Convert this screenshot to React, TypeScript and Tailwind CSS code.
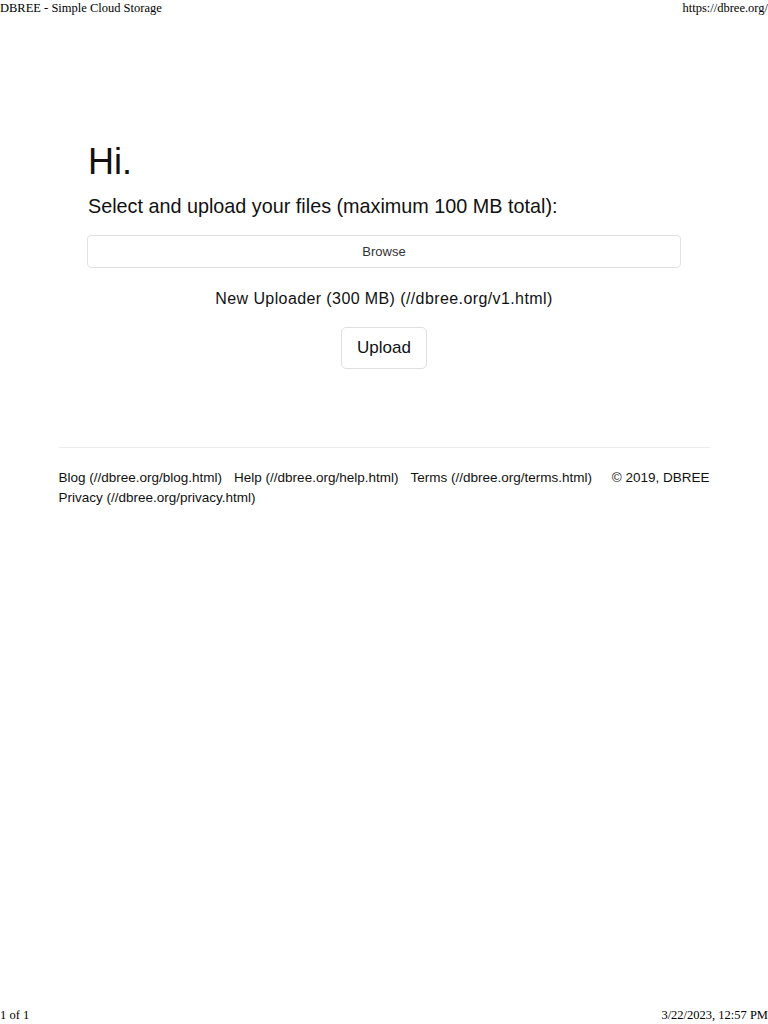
export default function App() {
  const links = [
    "Blog (//dbree.org/blog.html)",
    "Help (//dbree.org/help.html)",
    "Terms (//dbree.org/terms.html)",
    "Privacy (//dbree.org/privacy.html)",
  ];

  return (
    <div className="flex h-[1024px] w-[768px] flex-col bg-white text-[#111]">
      {/* print header */}
      <div className="flex h-[20px] justify-between font-['Liberation_Serif',serif] text-[12.5px] leading-[16px] text-black">
        <span>DBREE - Simple Cloud Storage</span>
        <span>https://dbree.org/</span>
      </div>

      <div className="font-['Liberation_Sans',Arial,sans-serif]">
        {/* upload panel */}
        <div className="mx-auto mt-[124px] w-[594px]">
          <h1 className="ml-[1px] text-[36px] leading-[36px] font-normal">Hi.</h1>
          <p className="mt-[16px] ml-[1px] text-[19.8px] leading-[20px]">
            Select and upload your files (maximum 100 MB total):
          </p>
          <div className="mt-[19px] flex h-[33px] items-center justify-center rounded-[4px] border border-[#e2e2e2] text-[13px] text-[#333]">
            Browse
          </div>
          <p className="mt-[23px] text-center text-[16px] leading-[16px] tracking-[0.4px]">
            New Uploader (300 MB) (//dbree.org/v1.html)
          </p>
          <div className="mt-[20px] flex justify-center">
            <button className="h-[42px] w-[86px] rounded-[5px] border border-[#e0e0e0] bg-white text-[17px] text-[#111]">
              Upload
            </button>
          </div>
        </div>

        {/* footer */}
        <div className="mx-auto mt-[78px] w-[651px] border-t border-[#ececec] pt-[20px] text-[13.5px] leading-[20px]">
          <span className="float-right">© 2019, DBREE</span>
          {links.map((l) => (
            <span key={l} className="mr-[12px] inline-block">
              {l}
            </span>
          ))}
        </div>
      </div>

      <div className="flex-1" />

      {/* print footer */}
      <div className="flex h-[20px] justify-between pt-[3px] font-['Liberation_Serif',serif] text-[12.5px] leading-[16px] text-black">
        <span>1 of 1</span>
        <span>3/22/2023, 12:57 PM</span>
      </div>
    </div>
  );
}
